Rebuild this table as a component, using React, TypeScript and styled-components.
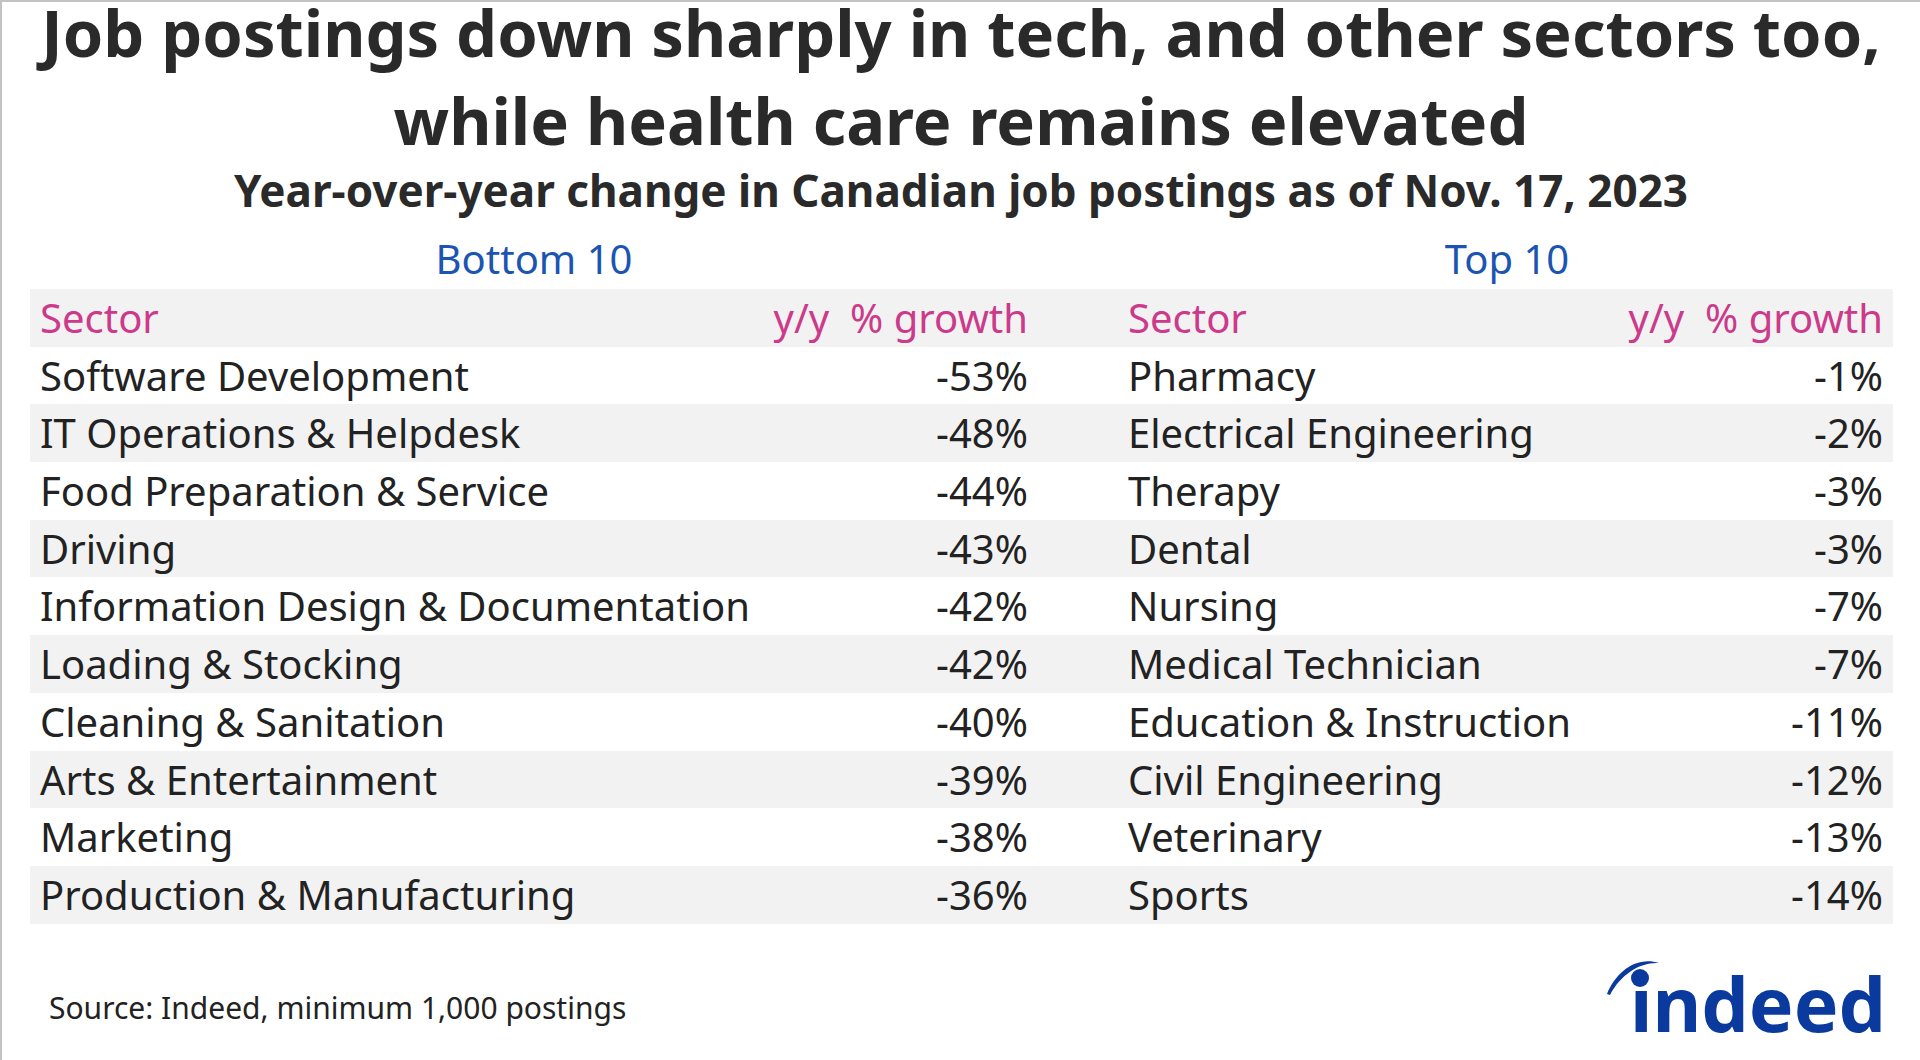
import React from "react";
import styled, { createGlobalStyle } from "styled-components";

const GlobalStyle = createGlobalStyle`
  html, body {
    margin: 0;
    padding: 0;
    background: #ffffff;
  }
  body {
    font-family: "Noto Sans", "Open Sans", sans-serif;
    color: #222222;
  }
`;

const Page = styled.div`
  box-sizing: border-box;
  width: 1920px;
  height: 1060px;
  border-left: 2px solid #c2c2c2;
  border-top: 2px solid #c2c2c2;
  display: flex;
  flex-direction: column;
  overflow: hidden;
`;

const Title = styled.h1`
  margin: 0;
  display: flex;
  flex-direction: column;
  align-items: center;
  gap: 28px;
  font-size: 65px;
  line-height: 60px;
  font-weight: 700;
  color: #2a2a2a;
  white-space: nowrap;
`;

const Subtitle = styled.h2`
  margin: 15px 0 0;
  font-size: 44px;
  line-height: 50px;
  font-weight: 700;
  color: #2a2a2a;
  text-align: center;
`;

const Groups = styled.div`
  display: grid;
  grid-template-columns: 1008px 1fr;
  margin: 21px 0 0 28px;
  width: 1863px;
`;

const GroupLabel = styled.div<{ $inset?: number }>`
  font-size: 40px;
  line-height: 46px;
  color: #1b55b1;
  text-align: center;
  padding-left: ${(p) => p.$inset ?? 0}px;
`;

const Table = styled.div`
  margin: 7px 0 0 28px;
  width: 1863px;
  display: flex;
  flex-direction: column;
`;

const Row = styled.div<{ $shade?: boolean; $head?: boolean }>`
  display: grid;
  grid-template-columns: 720px 278px 1fr 300px;
  height: 57.7px;
  align-items: center;
  background: ${(p) => (p.$shade ? "#f2f2f2" : "#ffffff")};
  color: ${(p) => (p.$head ? "#cc3a8b" : "#222222")};
  font-size: 40px;
  line-height: 57.7px;
  white-space: nowrap;
`;

const Cell = styled.div<{ $align?: "left" | "right"; $pl?: number; $pr?: number }>`
  text-align: ${(p) => p.$align ?? "left"};
  padding-left: ${(p) => p.$pl ?? 0}px;
  padding-right: ${(p) => p.$pr ?? 0}px;
`;

const Footer = styled.div`
  margin-top: auto;
  display: flex;
  justify-content: space-between;
  align-items: flex-end;
  padding: 0 24px 0 47px;
`;

const Source = styled.div`
  font-size: 30px;
  line-height: 40px;
  color: #222222;
  margin-bottom: 32px;
`;

const Logo = styled.svg`
  display: block;
  width: 300px;
  height: 90px;
  margin-bottom: 20px;
`;

const bottom: [string, string][] = [
  ["Software Development", "-53%"],
  ["IT Operations & Helpdesk", "-48%"],
  ["Food Preparation & Service", "-44%"],
  ["Driving", "-43%"],
  ["Information Design & Documentation", "-42%"],
  ["Loading & Stocking", "-42%"],
  ["Cleaning & Sanitation", "-40%"],
  ["Arts & Entertainment", "-39%"],
  ["Marketing", "-38%"],
  ["Production & Manufacturing", "-36%"],
];

const top: [string, string][] = [
  ["Pharmacy", "-1%"],
  ["Electrical Engineering", "-2%"],
  ["Therapy", "-3%"],
  ["Dental", "-3%"],
  ["Nursing", "-7%"],
  ["Medical Technician", "-7%"],
  ["Education & Instruction", "-11%"],
  ["Civil Engineering", "-12%"],
  ["Veterinary", "-13%"],
  ["Sports", "-14%"],
];

const BRAND = "#0a3a9e";

function IndeedLogo() {
  return (
    <Logo viewBox="0 0 300 90">
      {/* swoosh over the i */}
      <path
        d="M11 44 C 20 22, 40 6, 63 13 C 44 12, 25 24, 14 45 Z"
        fill={BRAND}
      />
      <circle cx="44" cy="28" r="9" fill={BRAND} />
      <text
        x="34"
        y="82"
        textLength="256"
        lengthAdjust="spacingAndGlyphs"
        fontFamily="'Noto Sans', sans-serif"
        fontWeight="700"
        fontSize="76"
        fill={BRAND}
      >
        ındeed
      </text>
    </Logo>
  );
}

export default function App() {
  return (
    <>
      <GlobalStyle />
      <Page>
        <Title>
          <span>Job postings down sharply in tech, and other sectors too,</span>
          <span>while health care remains elevated</span>
        </Title>
        <Subtitle>
          Year-over-year change in Canadian job postings as of Nov. 17, 2023
        </Subtitle>
        <Groups>
          <GroupLabel>Bottom 10</GroupLabel>
          <GroupLabel $inset={83}>Top 10</GroupLabel>
        </Groups>
        <Table>
          <Row $shade $head>
            <Cell $pl={10}>Sector</Cell>
            <Cell $align="right">y/y&nbsp; % growth</Cell>
            <Cell $pl={100}>Sector</Cell>
            <Cell $align="right" $pr={10}>
              y/y&nbsp; % growth
            </Cell>
          </Row>
          {bottom.map(([sector, value], i) => (
            <Row key={sector} $shade={i % 2 === 1}>
              <Cell $pl={10}>{sector}</Cell>
              <Cell $align="right">{value}</Cell>
              <Cell $pl={100}>{top[i][0]}</Cell>
              <Cell $align="right" $pr={10}>
                {top[i][1]}
              </Cell>
            </Row>
          ))}
        </Table>
        <Footer>
          <Source>Source: Indeed, minimum 1,000 postings</Source>
          <IndeedLogo />
        </Footer>
      </Page>
    </>
  );
}
